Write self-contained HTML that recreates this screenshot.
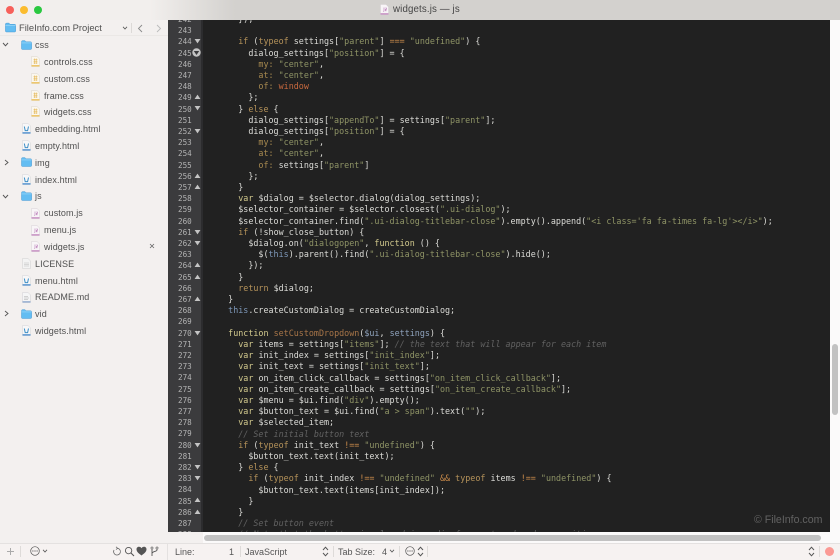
<!DOCTYPE html>
<html><head><meta charset="utf-8">
<style>
html,body{margin:0;padding:0;width:840px;height:560px;overflow:hidden;background:#f3f0ef;font-family:"Liberation Sans",sans-serif}
.a{position:absolute}
#tb{left:0;top:0;width:840px;height:20px;background:linear-gradient(90deg,#f2efed 0,#f2efed 150px,#d3d1ce 235px,#d3d1ce 100%)}
.dot{position:absolute;top:6px;width:8px;height:8px;border-radius:50%}
#side{left:0;top:20px;width:168px;height:523px;background:#f3f0ef}
.r{position:absolute;font-size:9px;line-height:12px;color:#505050;white-space:nowrap;letter-spacing:.1px}
.i{position:absolute}
#gut{left:168px;top:20px;width:35px;height:512px;background:#3b3b3d;overflow:hidden}
#gut:after{content:"";position:absolute;right:0;top:0;width:2px;height:512px;background:#2c2c2e}
.n{position:absolute;left:10px;font:7.6px/11.2px "DejaVu Sans Mono",monospace;color:#b4b4b4}
.f{position:absolute;left:26px}
#code{left:203px;top:20px;width:627px;height:512px;background:#212121;overflow:hidden}
pre{position:absolute;left:5px;top:-6px;margin:0;font:8.39px/11.2px "DejaVu Sans Mono",monospace;color:#dcdcd8;white-space:pre}
.k{color:#d3ca8e}.t{color:#b6935a}.s{color:#8f9466}.c{color:#626262;font-style:italic}.o{color:#c98a4a}.w{color:#c8693f}.th{color:#7d97b8}.fn{color:#a87548}.p{color:#8fa3bd}.m{color:#a88a50}
#st{left:0;top:543px;width:840px;height:17px;background:#f6f2f1;border-top:1px solid #e4e1e0;box-sizing:border-box}
.st{position:absolute;top:547px;font-size:9px;line-height:11px;color:#555;white-space:nowrap}
</style></head><body>
<svg width="0" height="0" style="position:absolute">
<defs>
<symbol id="fo" viewBox="0 0 12 11"><path d="M.5 2Q.5 .7 1.7 .7H4.3L5.5 2H10.6Q11.6 2 11.6 3V9.4Q11.6 10.4 10.6 10.4H1.5Q.5 10.4 .5 9.4Z" fill="#63bdf2" stroke="#3d93cf" stroke-width=".5"/><path d="M.6 3.2H11.5" stroke="#9ad6f8" stroke-width=".8"/></symbol>
<symbol id="css" viewBox="0 0 9 11"><path d="M.5.5H6L8.5 3V10.5H.5Z" fill="#fbf7ee" stroke="#d8d3c8" stroke-width=".5"/><path d="M.5 9H8.5V10.6H.5Z" fill="#eec76e"/><path d="M2.5 3.5H6.5M2.5 5.2H6.5M2.5 7H6.5M3.6 2.5V8M5.2 2.5V8" stroke="#e4b653" stroke-width=".6"/></symbol>
<symbol id="js" viewBox="0 0 9 11"><path d="M.5.5H6L8.5 3V10.5H.5Z" fill="#f8f5f7" stroke="#d5d0d4" stroke-width=".5"/><path d="M.5 9.2H8.5V10.6H.5Z" fill="#c58cc2"/><path d="M4 3.5V7L3 7.4M5.2 4H6.5V5.3H5.4V6.8H6.6" fill="none" stroke="#b878b6" stroke-width=".6"/></symbol>
<symbol id="ht" viewBox="0 0 9 11"><path d="M.5.5H6L8.5 3V10.5H.5Z" fill="#f7f7f8" stroke="#d3d3d6" stroke-width=".5"/><path d="M.5 9.2H8.5V10.6H.5Z" fill="#4f90cf"/><path d="M2.3 3.5L3.2 7.6H5.6L6.5 3.5" fill="none" stroke="#3e8fc6" stroke-width="1"/></symbol>
<symbol id="tx" viewBox="0 0 9 11"><path d="M.5.5H6L8.5 3V10.5H.5Z" fill="#f3f3f3" stroke="#cfcfcf" stroke-width=".5"/><path d="M2 5H7M2 6.5H7M2 8H7" stroke="#bbb" stroke-width=".5"/></symbol>
<symbol id="md" viewBox="0 0 9 11"><path d="M.5.5H6L8.5 3V10.5H.5Z" fill="#f5f5f6" stroke="#cfcfd3" stroke-width=".5"/><path d="M.5 9.2H8.5V10.6H.5Z" fill="#8fa9cf"/><path d="M2 4.5H6M2 6H7M2 7.5H6" stroke="#aaa" stroke-width=".5"/></symbol>
<symbol id="dn" viewBox="0 0 7 6"><path d="M.6 1H6.4L3.5 5.4Z" fill="#c4c4c4"/></symbol>
<symbol id="up" viewBox="0 0 7 6"><path d="M.6 5H6.4L3.5 .6Z" fill="#c4c4c4"/></symbol>
<symbol id="ud" viewBox="0 0 7 11"><path d="M1 4L3.5 1.2L6 4M1 7L3.5 9.8L6 7" fill="none" stroke="#555" stroke-width="1"/></symbol>
<symbol id="mo" viewBox="0 0 10 10"><circle cx="5" cy="5" r="4.3" fill="none" stroke="#555" stroke-width=".7"/><circle cx="2.9" cy="5" r=".6" fill="#555"/><circle cx="5" cy="5" r=".6" fill="#555"/><circle cx="7.1" cy="5" r=".6" fill="#555"/></symbol>
<symbol id="cv" viewBox="0 0 7 5"><path d="M1 1L3.5 3.8L6 1" fill="none" stroke="#555" stroke-width="1"/></symbol>
</defs></svg>

<div class="a" id="tb"></div>
<div class="dot" style="left:6px;background:#f7605a"></div>
<div class="dot" style="left:20px;background:#fbbc2e"></div>
<div class="dot" style="left:34px;background:#2ac840"></div>
<svg class="i" style="left:380px;top:4px" width="9" height="11"><use href="#js"/></svg>
<div class="a" style="left:393px;top:3px;font-size:9.7px;line-height:13px;color:#454545;white-space:nowrap;letter-spacing:.15px">widgets.js — js</div>

<div class="a" id="side"></div>
<div class="a" style="left:0;top:35px;width:168px;height:1px;background:#ebe8e6"></div>
<svg class="i" style="left:5px;top:22px" width="11" height="11"><use href="#fo"/></svg>
<div class="a" style="left:19px;top:22px;font-size:9.4px;line-height:12px;color:#505050;white-space:nowrap">FileInfo.com Project</div>
<svg class="i" style="left:122px;top:26px" width="6" height="4"><use href="#cv"/></svg>
<div class="a" style="left:131px;top:23px;width:1px;height:10px;background:#dcd9d7"></div>
<svg class="i" style="left:137px;top:24px" width="7" height="9"><path d="M5 1L1.5 4.5L5 8" fill="none" stroke="#8a8a8a" stroke-width=".9"/></svg>
<svg class="i" style="left:155px;top:24px" width="7" height="9"><path d="M2 1L5.5 4.5L2 8" fill="none" stroke="#bbb" stroke-width=".9"/></svg>

<svg class="i" style="left:2px;top:42px" width="7" height="5"><use href="#cv"/></svg>
<svg class="i" style="left:21px;top:40px" width="11" height="10"><use href="#fo"/></svg><div class="r" style="left:35px;top:39px">css</div>
<svg class="i" style="left:31px;top:56px" width="9" height="11"><use href="#css"/></svg><div class="r" style="left:44px;top:56px">controls.css</div>
<svg class="i" style="left:31px;top:73px" width="9" height="11"><use href="#css"/></svg><div class="r" style="left:44px;top:73px">custom.css</div>
<svg class="i" style="left:31px;top:90px" width="9" height="11"><use href="#css"/></svg><div class="r" style="left:44px;top:90px">frame.css</div>
<svg class="i" style="left:31px;top:106px" width="9" height="11"><use href="#css"/></svg><div class="r" style="left:44px;top:106px">widgets.css</div>
<svg class="i" style="left:22px;top:123px" width="9" height="11"><use href="#ht"/></svg><div class="r" style="left:35px;top:123px">embedding.html</div>
<svg class="i" style="left:22px;top:140px" width="9" height="11"><use href="#ht"/></svg><div class="r" style="left:35px;top:140px">empty.html</div>
<svg class="i" style="left:4px;top:159px" width="5" height="7"><path d="M1 1L4 3.5L1 6" fill="none" stroke="#555" stroke-width=".9"/></svg>
<svg class="i" style="left:21px;top:157px" width="11" height="10"><use href="#fo"/></svg><div class="r" style="left:35px;top:157px">img</div>
<svg class="i" style="left:22px;top:174px" width="9" height="11"><use href="#ht"/></svg><div class="r" style="left:35px;top:174px">index.html</div>
<svg class="i" style="left:2px;top:194px" width="7" height="5"><use href="#cv"/></svg>
<svg class="i" style="left:21px;top:191px" width="11" height="10"><use href="#fo"/></svg><div class="r" style="left:35px;top:190px">js</div>
<svg class="i" style="left:31px;top:208px" width="9" height="11"><use href="#js"/></svg><div class="r" style="left:44px;top:207px">custom.js</div>
<svg class="i" style="left:31px;top:225px" width="9" height="11"><use href="#js"/></svg><div class="r" style="left:44px;top:224px">menu.js</div>
<svg class="i" style="left:31px;top:241px" width="9" height="11"><use href="#js"/></svg><div class="r" style="left:44px;top:241px">widgets.js</div>
<svg class="i" style="left:149px;top:243px" width="6" height="6"><path d="M1 1L5 5M5 1L1 5" stroke="#666" stroke-width=".8"/></svg>
<svg class="i" style="left:22px;top:258px" width="9" height="11"><use href="#tx"/></svg><div class="r" style="left:35px;top:258px">LICENSE</div>
<svg class="i" style="left:22px;top:275px" width="9" height="11"><use href="#ht"/></svg><div class="r" style="left:35px;top:275px">menu.html</div>
<svg class="i" style="left:22px;top:292px" width="9" height="11"><use href="#md"/></svg><div class="r" style="left:35px;top:291px">README.md</div>
<svg class="i" style="left:4px;top:310px" width="5" height="7"><path d="M1 1L4 3.5L1 6" fill="none" stroke="#555" stroke-width=".9"/></svg>
<svg class="i" style="left:21px;top:309px" width="11" height="10"><use href="#fo"/></svg><div class="r" style="left:35px;top:308px">vid</div>
<svg class="i" style="left:22px;top:325px" width="9" height="11"><use href="#ht"/></svg><div class="r" style="left:35px;top:325px">widgets.html</div>

<div class="a" id="gut">
<div class="n" style="top:-6px">242</div><div class="n" style="top:5px">243</div><div class="n" style="top:16px">244</div><div class="n" style="top:28px">245</div><div class="n" style="top:39px">246</div><div class="n" style="top:50px">247</div><div class="n" style="top:61px">248</div><div class="n" style="top:72px">249</div><div class="n" style="top:84px">250</div><div class="n" style="top:95px">251</div><div class="n" style="top:106px">252</div><div class="n" style="top:117px">253</div><div class="n" style="top:128px">254</div><div class="n" style="top:140px">255</div><div class="n" style="top:151px">256</div><div class="n" style="top:162px">257</div><div class="n" style="top:173px">258</div><div class="n" style="top:184px">259</div><div class="n" style="top:196px">260</div><div class="n" style="top:207px">261</div><div class="n" style="top:218px">262</div><div class="n" style="top:229px">263</div><div class="n" style="top:240px">264</div><div class="n" style="top:252px">265</div><div class="n" style="top:263px">266</div><div class="n" style="top:274px">267</div><div class="n" style="top:285px">268</div><div class="n" style="top:296px">269</div><div class="n" style="top:308px">270</div><div class="n" style="top:319px">271</div><div class="n" style="top:330px">272</div><div class="n" style="top:341px">273</div><div class="n" style="top:352px">274</div><div class="n" style="top:364px">275</div><div class="n" style="top:375px">276</div><div class="n" style="top:386px">277</div><div class="n" style="top:397px">278</div><div class="n" style="top:408px">279</div><div class="n" style="top:420px">280</div><div class="n" style="top:431px">281</div><div class="n" style="top:442px">282</div><div class="n" style="top:453px">283</div><div class="n" style="top:464px">284</div><div class="n" style="top:476px">285</div><div class="n" style="top:487px">286</div><div class="n" style="top:498px">287</div><div class="n" style="top:509px">288</div>
<svg class="f" style="top:18px" width="7" height="6"><use href="#dn"/></svg>
<svg class="f" style="left:24px;top:28px" width="9" height="9"><circle cx="4.5" cy="4.5" r="4.2" fill="#c4c4c4"/><path d="M1.8 3H7.2L4.5 7Z" fill="#3b3b3d"/></svg>
<svg class="f" style="top:74px" width="7" height="6"><use href="#up"/></svg>
<svg class="f" style="top:85px" width="7" height="6"><use href="#dn"/></svg>
<svg class="f" style="top:108px" width="7" height="6"><use href="#dn"/></svg>
<svg class="f" style="top:153px" width="7" height="6"><use href="#up"/></svg>
<svg class="f" style="top:164px" width="7" height="6"><use href="#up"/></svg>
<svg class="f" style="top:209px" width="7" height="6"><use href="#dn"/></svg>
<svg class="f" style="top:220px" width="7" height="6"><use href="#dn"/></svg>
<svg class="f" style="top:242px" width="7" height="6"><use href="#up"/></svg>
<svg class="f" style="top:254px" width="7" height="6"><use href="#up"/></svg>
<svg class="f" style="top:276px" width="7" height="6"><use href="#up"/></svg>
<svg class="f" style="top:310px" width="7" height="6"><use href="#dn"/></svg>
<svg class="f" style="top:422px" width="7" height="6"><use href="#dn"/></svg>
<svg class="f" style="top:444px" width="7" height="6"><use href="#dn"/></svg>
<svg class="f" style="top:455px" width="7" height="6"><use href="#dn"/></svg>
<svg class="f" style="top:477px" width="7" height="6"><use href="#up"/></svg>
<svg class="f" style="top:489px" width="7" height="6"><use href="#up"/></svg>
</div>

<div class="a" id="code"><pre>      });

      <span class="t">if</span> (<span class="t">typeof</span> settings[<span class="s">"parent"</span>] <span class="o">===</span> <span class="s">"undefined"</span>) {
        dialog_settings[<span class="s">"position"</span>] = {
          <span class="m">my:</span> <span class="s">"center"</span>,
          <span class="m">at:</span> <span class="s">"center"</span>,
          <span class="m">of:</span> <span class="w">window</span>
        };
      } <span class="t">else</span> {
        dialog_settings[<span class="s">"appendTo"</span>] = settings[<span class="s">"parent"</span>];
        dialog_settings[<span class="s">"position"</span>] = {
          <span class="m">my:</span> <span class="s">"center"</span>,
          <span class="m">at:</span> <span class="s">"center"</span>,
          <span class="m">of:</span> settings[<span class="s">"parent"</span>]
        };
      }
      <span class="k">var</span> $dialog = $selector.dialog(dialog_settings);
      $selector_container = $selector.closest(<span class="s">".ui-dialog"</span>);
      $selector_container.find(<span class="s">".ui-dialog-titlebar-close"</span>).empty().append(<span class="s">"&lt;i class='fa fa-times fa-lg'&gt;&lt;/i&gt;"</span>);
      <span class="t">if</span> (!show_close_button) {
        $dialog.on(<span class="s">"dialogopen"</span>, <span class="k">function</span> () {
          $(<span class="th">this</span>).parent().find(<span class="s">".ui-dialog-titlebar-close"</span>).hide();
        });
      }
      <span class="t">return</span> $dialog;
    }
    <span class="th">this</span>.createCustomDialog = createCustomDialog;

    <span class="k">function</span> <span class="fn">setCustomDropdown</span>(<span class="p">$ui</span>, <span class="p">settings</span>) {
      <span class="k">var</span> items = settings[<span class="s">"items"</span>]; <span class="c">// the text that will appear for each item</span>
      <span class="k">var</span> init_index = settings[<span class="s">"init_index"</span>];
      <span class="k">var</span> init_text = settings[<span class="s">"init_text"</span>];
      <span class="k">var</span> on_item_click_callback = settings[<span class="s">"on_item_click_callback"</span>];
      <span class="k">var</span> on_item_create_callback = settings[<span class="s">"on_item_create_callback"</span>];
      <span class="k">var</span> $menu = $ui.find(<span class="s">"div"</span>).empty();
      <span class="k">var</span> $button_text = $ui.find(<span class="s">"a &gt; span"</span>).text(<span class="s">""</span>);
      <span class="k">var</span> $selected_item;
      <span class="c">// Set initial button text</span>
      <span class="t">if</span> (<span class="t">typeof</span> init_text <span class="o">!==</span> <span class="s">"undefined"</span>) {
        $button_text.text(init_text);
      } <span class="t">else</span> {
        <span class="t">if</span> (<span class="t">typeof</span> init_index <span class="o">!==</span> <span class="s">"undefined"</span> <span class="o">&amp;&amp;</span> <span class="t">typeof</span> items <span class="o">!==</span> <span class="s">"undefined"</span>) {
          $button_text.text(items[init_index]);
        }
      }
      <span class="c">// Set button event</span>
      <span class="c">// Note that the button is placed in a div for custom dropdown position</span></pre>
<div class="a" style="left:551px;top:494px;font-size:10.6px;line-height:12px;color:#626262;white-space:nowrap">© FileInfo.com</div>
</div>

<div class="a" style="left:203px;top:532px;width:637px;height:11px;background:#fbfafa"></div>
<div class="a" style="left:830px;top:20px;width:10px;height:523px;background:#fbfafa"></div>
<div class="a" style="left:204px;top:535px;width:617px;height:6px;border-radius:3px;background:#c2c2c2"></div>
<div class="a" style="left:832px;top:344px;width:6px;height:71px;border-radius:3px;background:#c2c2c2"></div>

<div class="a" id="st"></div>
<div class="a" style="left:167px;top:544px;width:1px;height:16px;background:#e4e1e0"></div>
<svg class="i" style="left:6px;top:547px" width="9" height="9"><path d="M4.5 1V8M1 4.5H8" stroke="#aaa" stroke-width="1"/></svg>
<div class="a" style="left:20px;top:546px;width:1px;height:11px;background:#dedbd9"></div>
<svg class="i" style="left:30px;top:546px" width="10" height="10"><use href="#mo"/></svg>
<svg class="i" style="left:42px;top:549px" width="6" height="4"><use href="#cv"/></svg>
<svg class="i" style="left:112px;top:546px" width="10" height="11"><path d="M5 2.2A3.4 3.4 0 1 1 2 4" fill="none" stroke="#666" stroke-width=".8"/><path d="M4 .8L5.6 2.2L4 3.6" fill="none" stroke="#666" stroke-width=".7"/></svg>
<svg class="i" style="left:124px;top:546px" width="11" height="11"><circle cx="4.6" cy="4.6" r="3.2" fill="none" stroke="#555" stroke-width=".9"/><path d="M7 7L10 10" stroke="#555" stroke-width="1.1"/></svg>
<svg class="i" style="left:136px;top:546px" width="11" height="10"><path d="M5.5 9.5C2 7 .5 5.4.5 3.3C.5 1.8 1.6.8 3 .8C4.1.8 5 1.4 5.5 2.3C6 1.4 6.9.8 8 .8C9.4.8 10.5 1.8 10.5 3.3C10.5 5.4 9 7 5.5 9.5Z" fill="#555"/></svg>
<svg class="i" style="left:150px;top:546px" width="9" height="11"><path d="M2 2V10M7 2V4C7 5.5 2 5.5 2 7.5" fill="none" stroke="#555" stroke-width=".9"/><circle cx="2" cy="2" r="1.1" fill="#f6f2f1" stroke="#555" stroke-width=".6"/><circle cx="7" cy="2" r="1.1" fill="#f6f2f1" stroke="#555" stroke-width=".6"/></svg>
<div class="st" style="left:175px">Line:</div>
<div class="st" style="left:229px">1</div>
<div class="a" style="left:240px;top:546px;width:1px;height:11px;background:#dedbd9"></div>
<div class="st" style="left:245px">JavaScript</div>
<svg class="i" style="left:322px;top:546px" width="7" height="11"><use href="#ud"/></svg>
<div class="a" style="left:333px;top:546px;width:1px;height:11px;background:#dedbd9"></div>
<div class="st" style="left:338px">Tab Size:</div>
<div class="st" style="left:382px">4</div>
<svg class="i" style="left:389px;top:549px" width="6" height="4"><use href="#cv"/></svg>
<div class="a" style="left:399px;top:546px;width:1px;height:11px;background:#dedbd9"></div>
<svg class="i" style="left:405px;top:546px" width="10" height="10"><use href="#mo"/></svg>
<svg class="i" style="left:417px;top:546px" width="7" height="11"><use href="#ud"/></svg>
<div class="a" style="left:427px;top:546px;width:1px;height:11px;background:#dedbd9"></div>
<svg class="i" style="left:808px;top:546px" width="7" height="11"><use href="#ud"/></svg>
<div class="a" style="left:819px;top:546px;width:1px;height:11px;background:#dedbd9"></div>
<div class="a" style="left:825px;top:547px;width:9px;height:9px;border-radius:50%;background:#fb9a95"></div>
</body></html>
